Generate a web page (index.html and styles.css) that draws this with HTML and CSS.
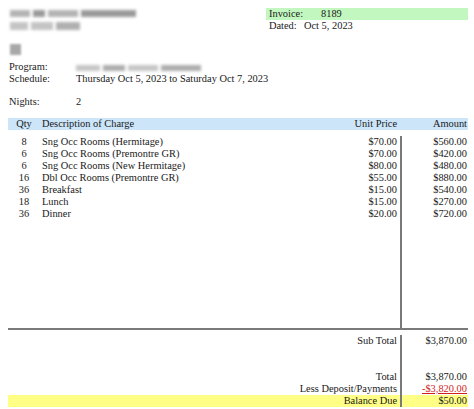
FILE: index.html
```html
<!DOCTYPE html>
<html>
<head>
<meta charset="utf-8">
<link rel="stylesheet" href="styles.css">
</head>
<body>
<div class="page">
  <div class="top">
    <div class="sender">
      <div class="blur-line l1"><span class="b w20"></span><span class="b w12 dk"></span><span class="b w30"></span><span class="b w55 dk"></span></div>
      <div class="blur-line l2"><span class="b w18"></span><span class="b w22"></span><span class="b w24 dk"></span></div>
    </div>
    <div class="invoice">
      <div class="inv-row green"><span class="inv-label">Invoice:</span><span>8189</span></div>
      <div class="inv-row"><span class="dated-label">Dated:</span><span>Oct 5, 2023</span></div>
    </div>
  </div>
  <div class="blur-sq"></div>
  <div class="info">
    <div class="info-row"><span class="info-label">Program:</span><span class="blur-line l3"><span class="b w24"></span><span class="b w22 dk"></span><span class="b w30"></span><span class="b w40 dk"></span></span></div>
    <div class="info-row"><span class="info-label">Schedule:</span><span>Thursday Oct 5, 2023 to Saturday Oct 7, 2023</span></div>
    <div class="info-row nights"><span class="info-label">Nights:</span><span>2</span></div>
  </div>
  <div class="thead">
    <span class="c-qty">Qty</span><span class="c-desc">Description of Charge</span><span class="c-unit">Unit Price</span><span class="c-amt">Amount</span>
  </div>
  <div class="items">
    <div class="items-left">
      <div class="row"><span class="c-qty">8</span><span class="c-desc">Sng Occ Rooms (Hermitage)</span><span class="c-unit">$70.00</span></div>
      <div class="row"><span class="c-qty">6</span><span class="c-desc">Sng Occ Rooms (Premontre GR)</span><span class="c-unit">$70.00</span></div>
      <div class="row"><span class="c-qty">6</span><span class="c-desc">Sng Occ Rooms (New Hermitage)</span><span class="c-unit">$80.00</span></div>
      <div class="row"><span class="c-qty">16</span><span class="c-desc">Dbl Occ Rooms (Premontre GR)</span><span class="c-unit">$55.00</span></div>
      <div class="row"><span class="c-qty">36</span><span class="c-desc">Breakfast</span><span class="c-unit">$15.00</span></div>
      <div class="row"><span class="c-qty">18</span><span class="c-desc">Lunch</span><span class="c-unit">$15.00</span></div>
      <div class="row"><span class="c-qty">36</span><span class="c-desc">Dinner</span><span class="c-unit">$20.00</span></div>
    </div>
    <div class="items-right">
      <div class="row"><span class="c-amt">$560.00</span></div>
      <div class="row"><span class="c-amt">$420.00</span></div>
      <div class="row"><span class="c-amt">$480.00</span></div>
      <div class="row"><span class="c-amt">$880.00</span></div>
      <div class="row"><span class="c-amt">$540.00</span></div>
      <div class="row"><span class="c-amt">$270.00</span></div>
      <div class="row"><span class="c-amt">$720.00</span></div>
    </div>
  </div>
  <div class="totals">
    <div class="t-row"><span class="t-label">Sub Total</span><span class="t-amt">$3,870.00</span></div>
    <div class="t-row spacer"><span class="t-label"></span><span class="t-amt"></span></div>
    <div class="t-row"><span class="t-label">Total</span><span class="t-amt">$3,870.00</span></div>
    <div class="t-row"><span class="t-label">Less Deposit/Payments</span><span class="t-amt neg">-$3,820.00</span></div>
    <div class="t-row due"><span class="t-label">Balance Due</span><span class="t-amt">$50.00</span></div>
  </div>
</div>
</body>
</html>
```

FILE: styles.css
```css
* { box-sizing: border-box; }
html, body { margin: 0; padding: 0; background: #fff; }
body {
  font-family: "Liberation Serif", "Times New Roman", serif;
  font-size: 10.4px;
  line-height: 12px;
  color: #1a1a1a;
}
.page { width: 474px; padding: 8px 6px 0 8px; }

.top { display: flex; justify-content: space-between; }
.sender { padding: 2px 0 0 2px; }
.blur-line { display: flex; gap: 3px; filter: blur(1.4px); }
.blur-line .b { display: block; height: 7px; background: #b4b4b4; }
.blur-line .dk { background: #9a9a9a; }
.l1 { margin-bottom: 5px; }
.l2 .b { height: 8px; background: #c4c4c4; }
.l2 .dk { background: #b0b0b0; }
.w12 { width: 12px; } .w16 { width: 16px; } .w18 { width: 18px; } .w20 { width: 20px; }
.w22 { width: 22px; } .w24 { width: 24px; } .w30 { width: 30px; } .w40 { width: 40px; } .w55 { width: 55px; }

.invoice { width: 202px; }
.inv-row { display: flex; height: 12px; padding-left: 3px; }
.green { background: #c2f7c0; }
.inv-label { width: 52px; }
.dated-label { width: 35px; }

.blur-sq { width: 11px; height: 11px; margin: 12px 0 0 2px; background: #a8a8a8; filter: blur(1px); }

.info { margin-top: 6px; }
.info-row { display: flex; align-items: center; height: 12px; }
.info-label { width: 68px; padding-left: 1px; }
.l3 { margin-top: 1px; }
.l3 .b { height: 6px; background: #c6c6c6; }
.l3 .dk { background: #adadad; }
.nights { margin-top: 11px; }

.thead {
  display: flex; height: 12px; margin-top: 10px;
  background: #cde5f9;
}
.c-qty { width: 32px; text-align: center; }
.c-desc { flex: 1; padding-left: 2px; }
.c-unit { width: 70px; text-align: right; padding-right: 3px; }
.thead .c-amt { width: 68px; text-align: right; padding-right: 1px; }

.items {
  display: flex; height: 194px; margin-top: 6px;
  border-bottom: 2px solid #7a7a7a;
}
.items-left { width: 394px; border-right: 2px solid #7a7a7a; }
.items-right { flex: 1; }
.row { display: flex; height: 12px; }
.items-right .row { justify-content: flex-end; padding-right: 1px; }

.totals { margin-top: 5px; }
.t-row { display: flex; height: 12px; padding-left: 172px; }
.t-label { width: 222px; text-align: right; padding-right: 3px; border-right: 2px solid #7a7a7a; }
.t-amt { flex: 1; text-align: right; padding-right: 1px; }
.spacer { height: 24px; }
.neg { color: #d11f1f; text-decoration: underline; }
.due { background: #ffff85; }
```
